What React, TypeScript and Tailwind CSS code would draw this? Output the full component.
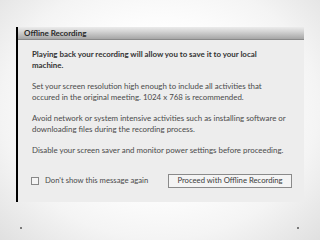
export default function App() {
  return (
    <div
      className="w-[320px] h-[240px] relative overflow-hidden bg-[radial-gradient(ellipse_at_50%_45%,#ffffff_40%,#f4f4f4_70%,#e0e0e0_100%)]"
      style={{ fontFamily: 'Lato, "Open Sans", sans-serif' }}
    >
      <div className="absolute left-[16px] top-[27px] w-[288px] h-[175px] flex flex-col border-l-2 border-black bg-[#ededed]">
        <div className="h-[13px] flex items-center pl-[6px] bg-[linear-gradient(#ececec,#d2d2d2_40%,#a6a6a6)] border-b border-[#8a8a8a]">
          <span className="text-[8px] font-bold text-[#2a2a2a] leading-none">Offline Recording</span>
        </div>
        <div className="flex flex-col pl-[14px] pr-[4px] pt-[9px] text-[7.9px] leading-[11px] text-[#4a4a4a] gap-[10px] whitespace-nowrap">
          <p className="font-bold text-[#333] text-[7.9px]">
            Playing back your recording will allow you to save it to your local
            <br />
            machine.
          </p>
          <p>
            Set your screen resolution high enough to include all activities that
            <br />
            occured in the original meeting. 1024 x 768 is recommended.
          </p>
          <p>
            Avoid network or system intensive activities such as installing software or
            <br />
            downloading files during the recording process.
          </p>
          <p>Disable your screen saver and monitor power settings before proceeding.</p>
        </div>
        <div className="mt-[18px] flex items-center pl-[13px]">
          <div className="w-[8px] h-[8px] border border-[#888] bg-[#f4f4f4]" />
          <span className="ml-[6px] text-[7.7px] text-[#4a4a4a]">Don't show this message again</span>
          <div className="ml-[auto] mr-[12px] w-[124px] h-[14px] border border-[#8a8a8a] bg-[#f4f4f4] flex items-center justify-center text-[7.7px] text-[#3a3a3a]">
            Proceed with Offline Recording
          </div>
        </div>
      </div>
      <div className="absolute left-[20px] top-[227px] w-[2px] h-[2px] rounded-full bg-[#555]" />
      <div className="absolute left-[297px] top-[227px] w-[2px] h-[2px] rounded-full bg-[#555]" />
    </div>
  );
}
